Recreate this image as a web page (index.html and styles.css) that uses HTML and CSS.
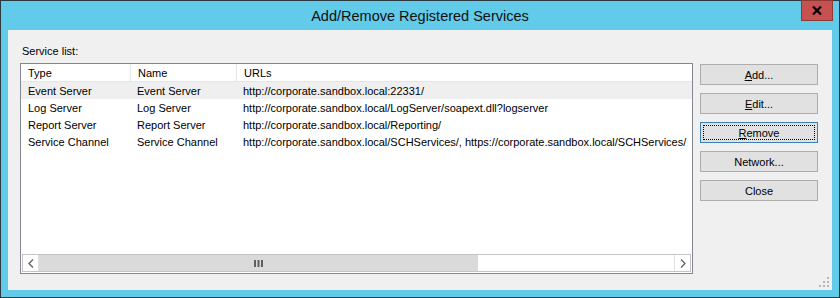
FILE: index.html
```html
<!DOCTYPE html>
<html>
<head>
<meta charset="utf-8">
<link rel="stylesheet" href="styles.css">
</head>
<body>
<div class="window">
  <div class="titlebar">
    <span class="title">Add/Remove Registered Services</span>
    <div class="close-btn"><svg width="10" height="9" viewBox="0 0 10 9"><path d="M1 0.5 L9 8.5 M9 0.5 L1 8.5" stroke="#000" stroke-width="2.2"/></svg></div>
  </div>
  <div class="client">
    <div class="label">Service list:</div>
    <div class="main">
      <div class="listbox">
        <div class="row header">
          <div class="cell c1">Type</div>
          <div class="cell c2">Name</div>
          <div class="cell c3">URLs</div>
        </div>
        <div class="row sel">
          <div class="cell c1">Event Server</div>
          <div class="cell c2">Event Server</div>
          <div class="cell c3">http://corporate.sandbox.local:22331/</div>
        </div>
        <div class="row">
          <div class="cell c1">Log Server</div>
          <div class="cell c2">Log Server</div>
          <div class="cell c3">http://corporate.sandbox.local/LogServer/soapext.dll?logserver</div>
        </div>
        <div class="row">
          <div class="cell c1">Report Server</div>
          <div class="cell c2">Report Server</div>
          <div class="cell c3">http://corporate.sandbox.local/Reporting/</div>
        </div>
        <div class="row">
          <div class="cell c1">Service Channel</div>
          <div class="cell c2">Service Channel</div>
          <div class="cell c3">http://corporate.sandbox.local/SCHServices/, https://corporate.sandbox.local/SCHServices/</div>
        </div>
        <div class="spacer"></div>
        <div class="hscroll">
          <div class="arrow left"><svg width="6" height="9" viewBox="0 0 6 9"><path d="M5 0.5 L1 4.5 L5 8.5" fill="none" stroke="#606060" stroke-width="1.3"/></svg></div>
          <div class="thumb"><svg width="9" height="7" viewBox="0 0 9 7"><rect x="0" y="0" width="2" height="7" fill="#606060"/><rect x="3.5" y="0" width="2" height="7" fill="#606060"/><rect x="7" y="0" width="2" height="7" fill="#606060"/></svg></div>
          <div class="track"></div>
          <div class="arrow right"><svg width="6" height="9" viewBox="0 0 6 9"><path d="M1 0.5 L5 4.5 L1 8.5" fill="none" stroke="#606060" stroke-width="1.3"/></svg></div>
        </div>
      </div>
      <div class="buttons">
        <div class="btn"><u>A</u>dd...</div>
        <div class="btn"><u>E</u>dit...</div>
        <div class="btn focus"><span class="focusrect"><u>R</u>emove</span></div>
        <div class="btn">Network...</div>
        <div class="btn">Close</div>
      </div>
    </div>
    <svg class="grip" width="11" height="11" viewBox="0 0 11 11">
      <g fill="#b8b8b8">
        <rect x="8" y="0" width="2" height="2"/>
        <rect x="4" y="4" width="2" height="2"/><rect x="8" y="4" width="2" height="2"/>
        <rect x="0" y="8" width="2" height="2"/><rect x="4" y="8" width="2" height="2"/><rect x="8" y="8" width="2" height="2"/>
      </g>
    </svg>
  </div>
</div>
</body>
</html>
```
FILE: styles.css
```css
* { box-sizing: border-box; }
html, body { margin: 0; padding: 0; }
body {
  width: 840px;
  height: 298px;
  overflow: hidden;
  font-family: "Liberation Sans", Arial, sans-serif;
  font-size: 11px;
  color: #000;
  background: #2b2b2b;
}
.window {
  width: 840px;
  height: 298px;
  border: 1px solid #2b3a40;
  background: #63cbea;
  display: flex;
  flex-direction: column;
}
.titlebar {
  position: relative;
  height: 29px;
  flex: none;
  display: flex;
  align-items: center;
  justify-content: center;
}
.title {
  font-size: 14.5px;
  color: #111;
  padding-top: 1px;
}
.close-btn {
  position: absolute;
  top: -1px;
  right: 6px;
  width: 32px;
  height: 21px;
  background: #c75050;
  border: 1px solid #8c3a32;
  display: flex;
  align-items: center;
  justify-content: center;
}
.client {
  position: relative;
  flex: 1;
  margin: 0 7px 7px 7px;
  background: #f0f0f0;
  padding: 14px 14px 16px 12px;
  display: flex;
  flex-direction: column;
}
.label {
  height: 19px;
  padding-left: 2px;
  line-height: 14px;
}
.main {
  flex: 1;
  display: flex;
  gap: 7px;
}
.listbox {
  width: 673px;
  height: 211px;
  border: 1px solid #828790;
  background: #fff;
  display: flex;
  flex-direction: column;
}
.row {
  display: flex;
  height: 17px;
  align-items: center;
  white-space: nowrap;
}
.row.header {
  height: 18px;
  border-bottom: 1px solid #e5e5e5;
}
.row.sel { background: #efefef; }
.cell {
  padding-left: 7px;
  height: 100%;
  display: flex;
  align-items: center;
}
.c1 { width: 109px; }
.c2 { width: 105px; }
.c3 { flex: 1; padding-left: 8px; }
.header .c1, .header .c2 { border-right: 1px solid #e5e5e5; }
.header .c2 { width: 106px; }
.header .c1 { width: 110px; }
.header .c3 { padding-left: 7px; }
.spacer { flex: 1; }
.hscroll {
  flex: none;
  height: 18px;
  margin: 0 1px 1px 1px;
  border: 1px solid #c4c4c4;
  display: flex;
}
.arrow {
  width: 16px;
  display: flex;
  align-items: center;
  justify-content: center;
  background: #fff;
}
.arrow.left { border-right: 1px solid #e0e0e0; }
.arrow.right { border-left: 1px solid #e0e0e0; }
.thumb {
  width: 439px;
  background: #dadada;
  display: flex;
  align-items: center;
  justify-content: center;
}
.track { flex: 1; background: #fff; }
.buttons {
  margin-top: 1px;
  display: flex;
  flex-direction: column;
  gap: 8px;
}
.btn {
  width: 118px;
  height: 21px;
  background: #e1e1e1;
  border: 1px solid #adadad;
  display: flex;
  align-items: center;
  justify-content: center;
}
.btn.focus {
  border-color: #3c7fb1;
  padding: 2px;
}
.focusrect {
  width: 100%;
  height: 100%;
  border: 1px dotted #000;
  display: flex;
  align-items: center;
  justify-content: center;
}
.grip {
  position: absolute;
  right: 2px;
  bottom: 2px;
}
```
